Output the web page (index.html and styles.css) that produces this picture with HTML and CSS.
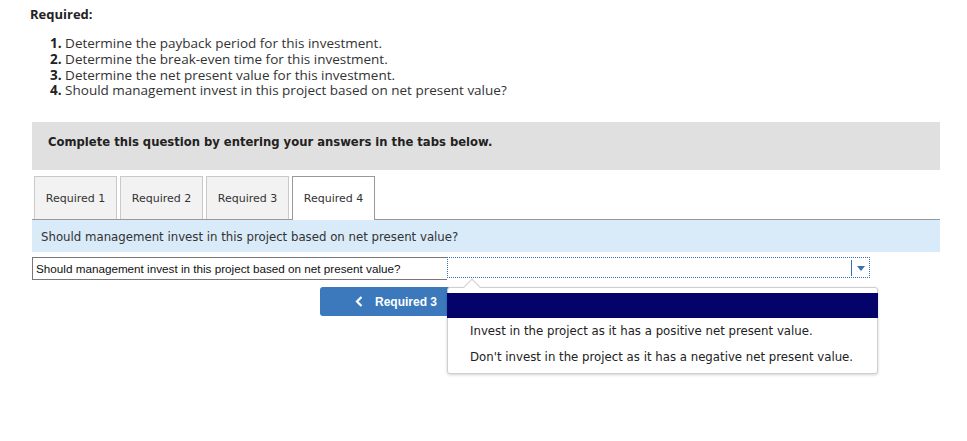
FILE: index.html
```html
<!DOCTYPE html>
<html>
<head>
<meta charset="utf-8">
<link rel="stylesheet" href="styles.css">
</head>
<body>
<div class="page">
  <div class="req-title">Required:</div>
  <ol class="req-list">
    <li><b>1.</b> Determine the payback period for this investment.</li>
    <li><b>2.</b> Determine the break-even time for this investment.</li>
    <li><b>3.</b> Determine the net present value for this investment.</li>
    <li><b>4.</b> Should management invest in this project based on net present value?</li>
  </ol>
  <div class="notice">Complete this question by entering your answers in the tabs below.</div>
  <div class="tabs">
    <div class="tab">Required 1</div>
    <div class="tab">Required 2</div>
    <div class="tab">Required 3</div>
    <div class="tab active">Required 4</div>
  </div>
  <div class="question">Should management invest in this project based on net present value?</div>
  <div class="answer-area">
    <div class="answer-row">
      <div class="answer-label">Should management invest in this project based on net present value?</div>
      <div class="answer-select">
        <span class="sel-sep"></span>
        <span class="sel-arrow"></span>
      </div>
    </div>
    <div class="nav-row">
      <div class="btn-prev">
        <svg class="chev" width="8" height="11" viewBox="0 0 8 11"><path d="M6.5 1 L2 5.5 L6.5 10" fill="none" stroke="#fff" stroke-width="2.2"/></svg>
        <span>Required 3</span>
      </div>
    </div>
    <div class="popup">
      <div class="notch"></div>
      <div class="opt-highlight"></div>
      <div class="opt">Invest in the project as it has a positive net present value.</div>
      <div class="opt">Don't invest in the project as it has a negative net present value.</div>
    </div>
  </div>
</div>
</body>
</html>
```
FILE: styles.css
```css
* { box-sizing: border-box; }
html, body { margin: 0; background: #fff; min-height: 441px; }
.page { padding: 6px 27px 0 32px; width: 967px; min-height: 441px; }
.req-title {
  font-family: "Open Sans", Lato, sans-serif;
  font-weight: 700; font-size: 13px; color: #222;
  margin-left: -2px; line-height: 16px;
}
.req-list {
  list-style: none; margin: 14px 0 0 0; padding: 0 0 0 18px;
  font-family: "Open Sans", Lato, sans-serif; font-size: 13.5px; color: #333;
  line-height: 15.8px;
}
.req-list b { color: #222; }
.notice {
  margin-top: 23px; height: 48px; width: 908px;
  background: #e0e0e0; padding: 13px 0 0 16px;
  font-family: "DejaVu Sans", Verdana, sans-serif; font-weight: 700;
  font-size: 11.6px; line-height: 14px; color: #222;
}
.tabs {
  margin-top: 6px; width: 908px; height: 44px;
  display: flex; gap: 3px; padding-left: 2px;
  border-bottom: 1px solid #999;
}
.tab {
  width: 83px; height: 43px;
  background: #f2f2f2; border: 1px solid #c9c9c9; border-bottom: none;
  display: flex; align-items: center; justify-content: center;
  font-family: "DejaVu Sans", Verdana, sans-serif; font-size: 11px; color: #333;
}
.tab.active { background: #fff; border: 1px solid #999; border-bottom: none; height: 44px; margin-bottom: -1px; }
.question {
  width: 908px; height: 32px; background: #d9eaf8;
  padding-left: 9px; padding-top: 2px; display: flex; align-items: center;
  font-family: "DejaVu Sans", Verdana, sans-serif; font-size: 11.75px; color: #333;
}
.answer-area { position: relative; }
.answer-row { display: flex; margin-top: 5px; height: 23px; }
.answer-label {
  width: 415px; height: 23px; border: 1px solid #777; border-right: none;
  padding-left: 3px; display: flex; align-items: center;
  font-family: "Liberation Sans", Arial, sans-serif; font-size: 11.7px; color: #111;
}
.answer-select {
  position: relative; width: 423px; height: 21px;
  border: 1px dotted #3a6fb6; background: #fff;
}
.sel-sep { position: absolute; right: 17px; top: 2px; width: 1px; height: 16px; background: #3a6fb6; }
.sel-arrow {
  position: absolute; right: 4px; top: 8px; width: 0; height: 0;
  border-left: 4px solid transparent; border-right: 4px solid transparent;
  border-top: 5px solid #3a6fb6;
}
.nav-row { margin-top: 7px; padding-left: 288px; }
.btn-prev {
  width: 130px; height: 29px; background: #3b78bc; border-radius: 3px;
  display: flex; align-items: center; padding-left: 35px;
  font-family: "Liberation Sans", Arial, sans-serif; font-weight: 700; font-size: 12px; color: #fff;
}
.chev { margin-right: 12px; }
.popup {
  position: absolute; left: 415px; top: 30px; width: 431px; height: 87px;
  background: #fff; border: 1px solid #cfcfcf; border-radius: 3px;
  box-shadow: 0 1px 3px rgba(0,0,0,0.18); z-index: 5; padding-top: 5px;
}
.notch {
  position: absolute; left: 18px; top: -7px; width: 12px; height: 12px;
  background: #fff; border-left: 1px solid #cfcfcf; border-top: 1px solid #cfcfcf;
  transform: rotate(45deg);
}
.opt-highlight { position: relative; height: 25px; background: #03036a; margin: 0 -1px; }
.opt {
  padding-left: 22px; height: 26px; display: flex; align-items: center;
  font-family: "DejaVu Sans", Verdana, sans-serif; font-size: 11.75px; color: #222;
}
```
